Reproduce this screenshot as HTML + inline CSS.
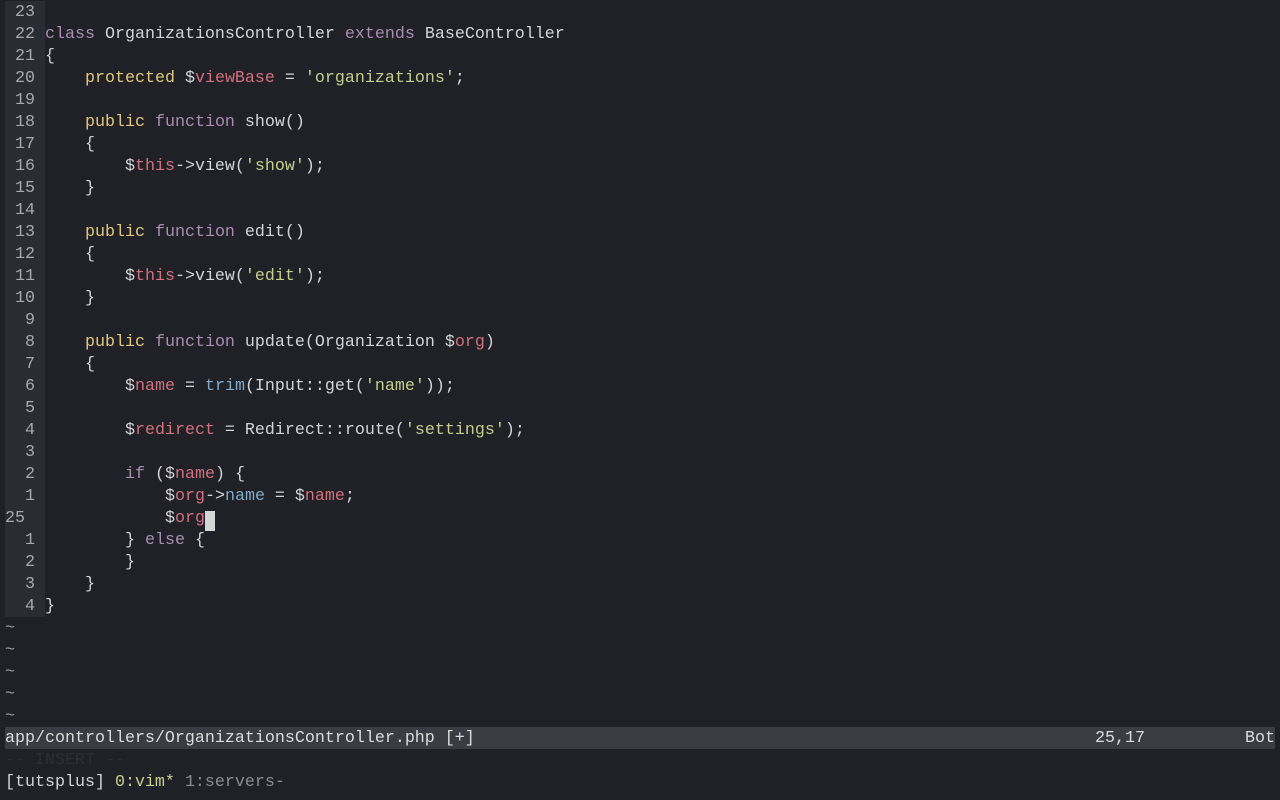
<!DOCTYPE html>
<html><head><meta charset="utf-8"><style>
html,body{margin:0;padding:0;background:#1f2127;width:1280px;height:800px;overflow:hidden}
#w{position:absolute;left:5px;top:1px;font-family:"Liberation Mono",monospace;font-size:16.67px;color:#d4d4d6}
.l{height:22px;line-height:24px;display:flex;white-space:pre}
.g{width:40px;background:#2a2c33;color:#a8a9ad;flex:none}
.k{color:#a98db1}.m{color:#e2c77f}.v{color:#d2707c}.s{color:#c5cc8c}.f{color:#82a8c8}
.cur{background:#d6d6d6;color:#1f2127;display:inline-block;height:20px;vertical-align:-4px}
.t{color:#9a9ca2}
.x{font-family:"Liberation Mono",monospace;font-size:16.67px;white-space:pre}
#st{position:absolute;left:5px;top:727px;width:1270px;height:22px;background:#3a3c44;color:#dcdcdf}
#st span{position:absolute;top:0;line-height:24px}
#ins{position:absolute;left:5px;top:749px;line-height:24px;color:#2c2e35}
#tm{position:absolute;left:5px;top:771px;line-height:24px;color:#d4d4d6}
</style></head><body><div id="w"><div class="l"><span class="g"> 23 </span></div><div class="l"><span class="g"> 22 </span><span><span class="k">class</span> OrganizationsController <span class="k">extends</span> BaseController</span></div><div class="l"><span class="g"> 21 </span><span>{</span></div><div class="l"><span class="g"> 20 </span><span>    <span class="m">protected</span> $<span class="v">viewBase</span> = <span class="s">'organizations'</span>;</span></div><div class="l"><span class="g"> 19 </span></div><div class="l"><span class="g"> 18 </span><span>    <span class="m">public</span> <span class="k">function</span> show()</span></div><div class="l"><span class="g"> 17 </span><span>    {</span></div><div class="l"><span class="g"> 16 </span><span>        $<span class="v">this</span>-&gt;view(<span class="s">'show'</span>);</span></div><div class="l"><span class="g"> 15 </span><span>    }</span></div><div class="l"><span class="g"> 14 </span></div><div class="l"><span class="g"> 13 </span><span>    <span class="m">public</span> <span class="k">function</span> edit()</span></div><div class="l"><span class="g"> 12 </span><span>    {</span></div><div class="l"><span class="g"> 11 </span><span>        $<span class="v">this</span>-&gt;view(<span class="s">'edit'</span>);</span></div><div class="l"><span class="g"> 10 </span><span>    }</span></div><div class="l"><span class="g">  9 </span></div><div class="l"><span class="g">  8 </span><span>    <span class="m">public</span> <span class="k">function</span> update(Organization $<span class="v">org</span>)</span></div><div class="l"><span class="g">  7 </span><span>    {</span></div><div class="l"><span class="g">  6 </span><span>        $<span class="v">name</span> = <span class="f">trim</span>(Input::get(<span class="s">'name'</span>));</span></div><div class="l"><span class="g">  5 </span></div><div class="l"><span class="g">  4 </span><span>        $<span class="v">redirect</span> = Redirect::route(<span class="s">'settings'</span>);</span></div><div class="l"><span class="g">  3 </span></div><div class="l"><span class="g">  2 </span><span>        <span class="k">if</span> ($<span class="v">name</span>) {</span></div><div class="l"><span class="g">  1 </span><span>            $<span class="v">org</span>-&gt;<span class="f">name</span> = $<span class="v">name</span>;</span></div><div class="l"><span class="g">25  </span><span>            $<span class="v">org</span><span class="cur"> </span></span></div><div class="l"><span class="g">  1 </span><span>        } <span class="k">else</span> {</span></div><div class="l"><span class="g">  2 </span><span>        }</span></div><div class="l"><span class="g">  3 </span><span>    }</span></div><div class="l"><span class="g">  4 </span><span>}</span></div><div class="l t">~</div><div class="l t">~</div><div class="l t">~</div><div class="l t">~</div><div class="l t">~</div></div>
<div id="st" class="x"><span style="left:0">app/controllers/OrganizationsController.php [+]</span><span style="left:1090px">25,17</span><span style="left:1240px">Bot</span></div>
<div id="ins" class="x">-- INSERT --</div>
<div id="tm" class="x">[tutsplus] <span style="color:#c9cf8e">0:vim*</span> <span style="color:#8a8c92">1:servers-</span></div>
</body></html>
